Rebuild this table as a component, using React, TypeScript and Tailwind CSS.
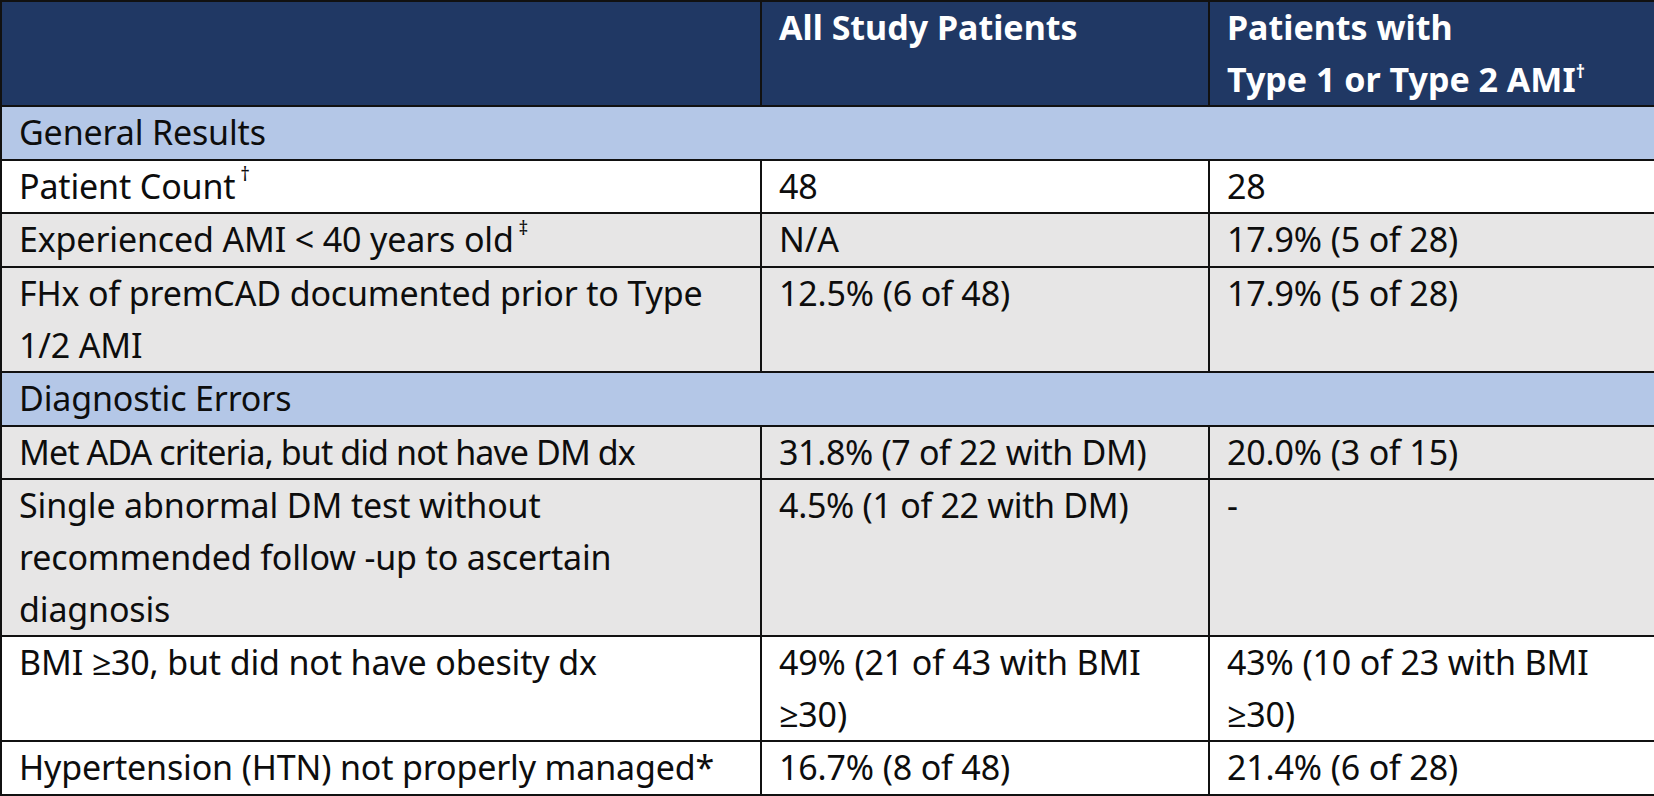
import React from 'react';

type Row = {
  label: React.ReactNode;
  all: React.ReactNode;
  ami: React.ReactNode;
  bg: 'white' | 'gray';
};

type Section = { title: string; rows: Row[] };

const sections: Section[] = [
  {
    title: 'General Results',
    rows: [
      {
        label: (
          <>
            Patient Count<sup className="text-[19px] align-[8px]"> †</sup>
          </>
        ),
        all: '48',
        ami: '28',
        bg: 'white',
      },
      {
        label: (
          <>
            Experienced AMI &lt; 40 years old<sup className="text-[19px] align-[8px]"> ‡</sup>
          </>
        ),
        all: 'N/A',
        ami: '17.9% (5 of 28)',
        bg: 'gray',
      },
      {
        label: 'FHx of premCAD documented prior to Type 1/2 AMI',
        all: '12.5% (6 of 48)',
        ami: '17.9% (5 of 28)',
        bg: 'gray',
      },
    ],
  },
  {
    title: 'Diagnostic Errors',
    rows: [
      {
        label: <span className="tracking-[-0.9px]">Met ADA criteria, but did not have DM dx</span>,
        all: <span className="tracking-[-0.35px]">31.8% (7 of 22 with DM)</span>,
        ami: '20.0% (3 of 15)',
        bg: 'gray',
      },
      {
        label: 'Single abnormal DM test without recommended follow -up to ascertain diagnosis',
        all: <span className="tracking-[-0.3px]">4.5% (1 of 22 with DM)</span>,
        ami: '-',
        bg: 'gray',
      },
      {
        label: 'BMI ≥30, but did not have obesity dx',
        all: '49% (21 of 43 with BMI ≥30)',
        ami: '43% (10 of 23 with BMI ≥30)',
        bg: 'white',
      },
      {
        label: 'Hypertension (HTN) not properly managed*',
        all: '16.7% (8 of 48)',
        ami: '21.4% (6 of 28)',
        bg: 'white',
      },
    ],
  },
];

const cell = 'border-2 border-[#111] px-[17px] py-0 align-top text-left';

export default function App() {
  return (
    <div className="w-[1654px] h-[796px] bg-white overflow-hidden" style={{ fontFamily: '"Noto Sans", "Open Sans", sans-serif' }}>
      <table className="w-[1654px] border-collapse table-fixed text-[34px] leading-[51.6px] text-[#0d0d0d]">
        <colgroup>
          <col className="w-[760px]" />
          <col className="w-[448px]" />
          <col className="w-[446px]" />
        </colgroup>
        <thead>
          <tr className="bg-[#203864] text-white font-bold">
            <th className={cell}>
              <br />
              &nbsp;
            </th>
            <th className={cell}>All Study Patients</th>
            <th className={cell}>
              Patients with
              <br />
              Type 1 or Type 2 AMI<sup className="text-[18px] align-[5px]">†</sup>
            </th>
          </tr>
        </thead>
        <tbody className="tracking-[-0.15px]">
          {sections.map((s) => (
            <React.Fragment key={s.title}>
              <tr className="bg-[#b4c7e7]">
                <td className={cell} colSpan={3}>
                  {s.title}
                </td>
              </tr>
              {s.rows.map((r, i) => (
                <tr key={i} className={r.bg === 'gray' ? 'bg-[#e7e6e6]' : 'bg-white'}>
                  <td className={cell}>{r.label}</td>
                  <td className={cell}>{r.all}</td>
                  <td className={cell}>{r.ami}</td>
                </tr>
              ))}
            </React.Fragment>
          ))}
        </tbody>
      </table>
    </div>
  );
}
